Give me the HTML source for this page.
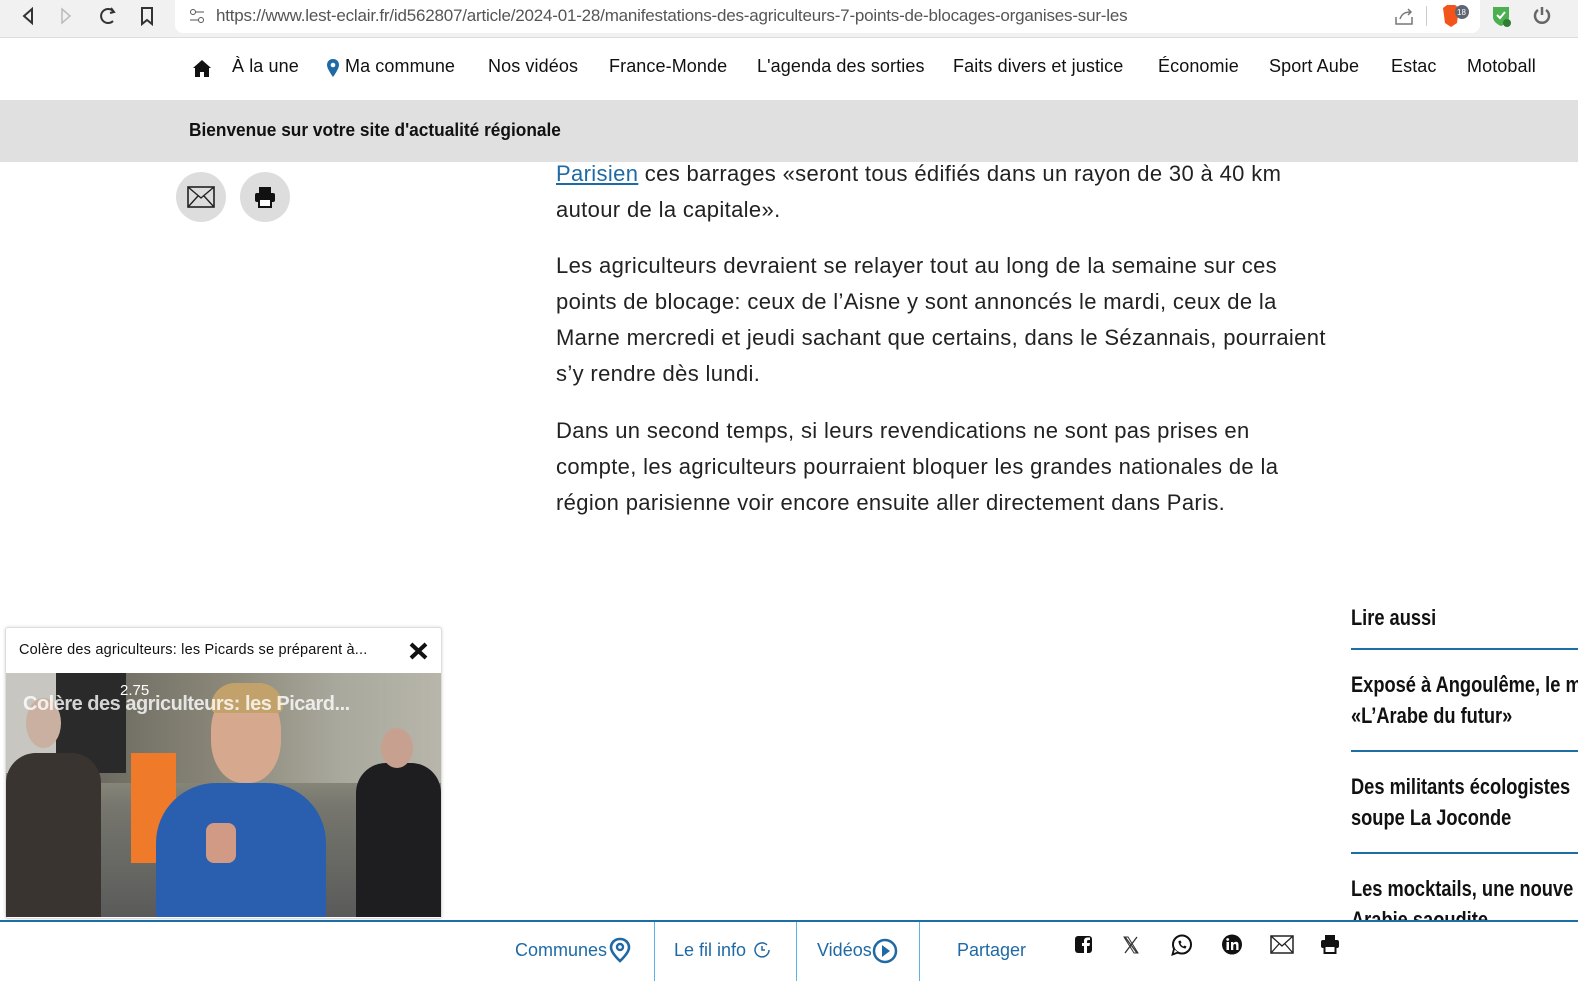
<!DOCTYPE html>
<html><head><meta charset="utf-8">
<style>
*{margin:0;padding:0;box-sizing:border-box}
body{width:1578px;height:981px;overflow:hidden;background:#fff;font-family:"Liberation Sans",sans-serif;color:#222;position:relative}
.abs{position:absolute}
.chrome{left:0;top:0;width:1578px;height:38px;background:#f1f1f1;border-bottom:1px solid #ddd}
.url{left:175px;top:0;width:1305px;height:33px;background:#fff;border-radius:0 0 8px 8px}
.urltext{left:216px;top:6px;font-size:17px;color:#555;white-space:nowrap;letter-spacing:-0.2px}
.nav{top:56px;font-size:18px;color:#111;white-space:nowrap;letter-spacing:0.1px}
.band{left:0;top:100px;width:1578px;height:62px;background:#e0e0e0}
.narrow{font-weight:bold;transform-origin:0 0}
.p{left:556px;font-size:22px;line-height:36px;color:#222;white-space:nowrap;letter-spacing:0.35px}
.circ{width:50px;height:50px;border-radius:50%;background:#ddd;top:172px}
.la{left:1351px;font-size:22px;color:#111;white-space:nowrap;line-height:31px;transform:scaleX(0.83)}
.hr{left:1351px;width:227px;height:2px;background:#1c6ea4}
.bot{left:0;top:920px;width:1578px;height:61px;background:#fff;border-top:2px solid #1c6ea4}
.sep{top:922px;width:1px;height:59px;background:#5ab4e8}
.bl{top:940px;font-size:18px;color:#1f6aa5;white-space:nowrap}
</style></head><body>
<div class="abs chrome"></div>
<div class="abs url"></div>
<svg class="abs" style="left:16px;top:5px" width="150" height="22" viewBox="0 0 150 22">
<path d="M16 4 L8 11 L16 18 Z" fill="none" stroke="#333" stroke-width="2"/>
<path d="M46 4 L54 11 L46 18 Z" fill="none" stroke="#bbb" stroke-width="1.5"/>
<path d="M97 6 A7 7 0 1 0 97 16" fill="none" stroke="#333" stroke-width="2"/><path d="M95 3 L98 7 L94 8" fill="none" stroke="#333" stroke-width="2"/>
<path d="M126 3 H136 V19 L131 15 L126 19 Z" fill="none" stroke="#333" stroke-width="2"/>
</svg>
<svg class="abs" style="left:189px;top:8px" width="16" height="16"><circle cx="4" cy="4" r="2.5" fill="none" stroke="#555"/><path d="M7 4H15M1 12H9" stroke="#555"/><circle cx="12" cy="12" r="2.5" fill="none" stroke="#555"/></svg>
<div class="abs urltext">https://www.lest-eclair.fr/id562807/article/2024-01-28/manifestations-des-agriculteurs-7-points-de-blocages-organises-sur-les</div>
<svg class="abs" style="left:1393px;top:5px" width="22" height="22"><path d="M3 12V19H19V12" fill="none" stroke="#777" stroke-width="1.5"/><path d="M7 14C9 8 13 7 18 7M15 4L18 7L15 10" fill="none" stroke="#777" stroke-width="1.5"/></svg>
<div class="abs" style="left:1426px;top:6px;width:1px;height:20px;background:#ccc"></div>
<svg class="abs" style="left:1440px;top:3px" width="30" height="26"><path d="M3 5L7 2H15L19 5L17 20L11 24L5 20Z" fill="#f2541b"/><circle cx="22" cy="9" r="7" fill="#5f6673"/><text x="17" y="12" font-size="8" fill="#fff" font-family="Liberation Sans">18</text></svg>
<svg class="abs" style="left:1490px;top:4px" width="24" height="24"><path d="M3 3H19V13C19 19 11 22 11 22C11 22 3 19 3 13Z" fill="#4caf50"/><path d="M7 11L10 14L15 8" stroke="#fff" stroke-width="2" fill="none"/><circle cx="17" cy="19" r="4" fill="#2e7d32"/></svg>
<svg class="abs" style="left:1532px;top:5px" width="20" height="20"><path d="M6 5A7 7 0 1 0 14 5" fill="none" stroke="#666" stroke-width="2.5"/><path d="M10 2V10" stroke="#666" stroke-width="2.5"/></svg>

<svg class="abs" style="left:192px;top:58px" width="20" height="20"><path d="M10 2L19 10H17V19H12V14H8V19H3V10H1Z" fill="#111"/></svg>
<div class="abs nav" style="left:232px">À la une</div>
<svg class="abs" style="left:326px;top:58px" width="14" height="20"><path d="M7 1C3 1 1 4 1 7C1 11 7 19 7 19C7 19 13 11 13 7C13 4 11 1 7 1Z" fill="#1f6aa5"/><circle cx="7" cy="7" r="2.3" fill="#fff"/></svg>
<div class="abs nav" style="left:345px">Ma commune</div>
<div class="abs nav" style="left:488px">Nos vidéos</div>
<div class="abs nav" style="left:609px">France-Monde</div>
<div class="abs nav" style="left:757px">L'agenda des sorties</div>
<div class="abs nav" style="left:953px">Faits divers et justice</div>
<div class="abs nav" style="left:1158px">Économie</div>
<div class="abs nav" style="left:1269px">Sport Aube</div>
<div class="abs nav" style="left:1391px">Estac</div>
<div class="abs nav" style="left:1467px">Motoball</div>

<div class="abs band"></div>
<div class="abs narrow" style="left:189px;top:120px;font-size:18px;color:#111;white-space:nowrap;transform:scaleX(0.96)">Bienvenue sur votre site d'actualité régionale</div>

<div class="abs circ" style="left:176px"></div>
<svg class="abs" style="left:187px;top:186px" width="28" height="22"><rect x="1" y="1" width="26" height="20" fill="none" stroke="#222" stroke-width="1.6"/><path d="M1 1L14 12L27 1M1 21L11 10M27 21L17 10" fill="none" stroke="#222" stroke-width="1.4"/></svg>
<div class="abs circ" style="left:240px"></div>
<svg class="abs" style="left:254px;top:186px" width="22" height="22"><rect x="5" y="1" width="12" height="6" fill="#111"/><rect x="1" y="7" width="20" height="9" rx="2" fill="#111"/><rect x="5" y="13" width="12" height="8" fill="#fff" stroke="#111" stroke-width="2"/></svg>

<div class="abs p" style="top:156px"><span style="color:#1f6aa5;text-decoration:underline">Parisien</span> ces barrages «seront tous édifiés dans un rayon de 30 à 40 km<br>autour de la capitale».</div>
<div class="abs p" style="top:248px">Les agriculteurs devraient se relayer tout au long de la semaine sur ces<br>points de blocage: ceux de l’Aisne y sont annoncés le mardi, ceux de la<br>Marne mercredi et jeudi sachant que certains, dans le Sézannais, pourraient<br>s’y rendre dès lundi.</div>
<div class="abs p" style="top:413px">Dans un second temps, si leurs revendications ne sont pas prises en<br>compte, les agriculteurs pourraient bloquer les grandes nationales de la<br>région parisienne voir encore ensuite aller directement dans Paris.</div>

<div class="abs la narrow" style="top:602px">Lire aussi</div>
<div class="abs hr" style="top:648px"></div>
<div class="abs la narrow" style="top:669px">Exposé à Angoulême, le m<br>«L’Arabe du futur»</div>
<div class="abs hr" style="top:750px"></div>
<div class="abs la narrow" style="top:771px">Des militants écologistes<br>soupe La Joconde</div>
<div class="abs hr" style="top:852px"></div>
<div class="abs la narrow" style="top:873px;height:47px;overflow:hidden">Les mocktails, une nouve<br>Arabie saoudite</div>

<div class="abs" style="left:5px;top:627px;width:437px;height:292px;border:1px solid #ddd;border-radius:3px;background:#fff;box-shadow:0 0 3px rgba(0,0,0,.15)"></div>
<div class="abs" style="left:19px;top:642px;font-size:14.5px;color:#111;white-space:nowrap;letter-spacing:0.2px">Colère des agriculteurs: les Picards se préparent à...</div>
<svg class="abs" style="left:409px;top:642px" width="19" height="18"><path d="M2 2L17 16M17 2L2 16" stroke="#111" stroke-width="4"/></svg>
<div class="abs" style="left:6px;top:673px;width:435px;height:244px;overflow:hidden;background:linear-gradient(180deg,#8a8a80 0%,#9a9a88 30%,#76766e 55%,#5a5a5a 100%)">
 <div class="abs" style="left:90px;top:0;width:345px;height:110px;background:linear-gradient(90deg,#6c6a60,#8d8a7c 40%,#a9a89c 70%,#b8b6aa)"></div>
 <div class="abs" style="left:0;top:0;width:60px;height:100px;background:#c8c6c0"></div>
 <div class="abs" style="left:50px;top:0;width:70px;height:100px;background:#2a2a2a"></div>
 <div class="abs" style="left:125px;top:80px;width:45px;height:110px;background:#ee7a2a"></div>
 <div class="abs" style="left:0;top:80px;width:95px;height:164px;background:#3a3430;border-radius:30px 30px 0 0"></div>
 <div class="abs" style="left:20px;top:25px;width:35px;height:50px;background:#c9b0a0;border-radius:50%"></div>
 <div class="abs" style="left:350px;top:90px;width:85px;height:154px;background:#1e1e20;border-radius:30px 30px 0 0"></div>
 <div class="abs" style="left:375px;top:55px;width:32px;height:40px;background:#c8a090;border-radius:50%"></div>
 <div class="abs" style="left:150px;top:110px;width:170px;height:134px;background:#2a5fb0;border-radius:60px 60px 0 0"></div>
 <div class="abs" style="left:205px;top:15px;width:70px;height:95px;background:#d6a88e;border-radius:45%"></div>
 <div class="abs" style="left:205px;top:10px;width:72px;height:30px;background:#c2a26a;border-radius:40px 40px 10px 10px"></div>
 <div class="abs" style="left:200px;top:150px;width:30px;height:40px;background:#d09a84;border-radius:8px"></div>
 <div class="abs" style="left:114px;top:9px;font-size:15px;color:#fff">2.75</div>
 <div class="abs" style="left:17px;top:20px;font-size:20px;font-weight:bold;color:rgba(255,255,255,.8);white-space:nowrap;letter-spacing:-0.5px">Colère des agriculteurs: les Picard...</div>
</div>

<div class="abs bot"></div>
<div class="abs sep" style="left:654px"></div>
<div class="abs sep" style="left:796px"></div>
<div class="abs sep" style="left:919px"></div>
<div class="abs bl" style="left:515px">Communes</div>
<svg class="abs" style="left:609px;top:937px" width="22" height="26"><path d="M11 2C6 2 2 5.5 2 10.5C2 16 11 24 11 24C11 24 20 16 20 10.5C20 5.5 16 2 11 2Z" fill="none" stroke="#1f6aa5" stroke-width="2.6"/><circle cx="11" cy="10" r="3" fill="none" stroke="#1f6aa5" stroke-width="2.4"/></svg>
<div class="abs bl" style="left:674px">Le fil info</div>
<svg class="abs" style="left:753px;top:941px" width="18" height="18"><path d="M14 4A7 7 0 1 0 16 9" fill="none" stroke="#1f6aa5" stroke-width="1.5"/><path d="M9 5V9H12" fill="none" stroke="#1f6aa5" stroke-width="1.5"/></svg>
<div class="abs bl" style="left:817px">Vidéos</div>
<svg class="abs" style="left:872px;top:938px" width="26" height="26"><circle cx="13" cy="13" r="11" fill="none" stroke="#1f6aa5" stroke-width="2.5"/><path d="M10 7L18 13L10 19Z" fill="#1f6aa5"/></svg>
<div class="abs bl" style="left:957px">Partager</div>
<svg class="abs" style="left:1074px;top:934px" width="270" height="22" viewBox="0 0 270 22">
<rect x="1" y="2" width="17" height="17" rx="3" fill="#111"/><path d="M13 19V12H15.5L16 9H13V7.5C13 6.5 13.5 6 14.5 6H16V3.5H13.5C11 3.5 10 5 10 7V9H8V12H10V19Z" fill="#fff"/>
<path d="M51 3L63 19M63 3L51 19" stroke="#333" stroke-width="1.3"/><path d="M50 3H54L64 19H60Z" fill="none" stroke="#333" stroke-width="1"/>
<circle cx="108" cy="10.5" r="9" fill="none" stroke="#111" stroke-width="2"/><path d="M100 15L98.5 20.5L104 18.5" fill="#fff" stroke="#111" stroke-width="1.8"/><path d="M104.5 7C104.5 11 107 14 111.5 14.5L112.5 12.5L110.5 11.5L109.5 12.5C108 12 107 11 106.5 9.5L107.5 8.5L106.5 6.5Z" fill="#111"/>
<circle cx="158" cy="10.5" r="10" fill="#111"/><rect x="152.5" y="8" width="2.5" height="8" fill="#fff"/><circle cx="153.7" cy="5.5" r="1.4" fill="#fff"/><path d="M157 16V8H159.3V9.3C160 8.3 161 7.8 162 7.8C164 7.8 164.5 9.2 164.5 11V16H162.2V11.5C162.2 10.5 161.8 10 161 10C160 10 159.3 10.7 159.3 11.8V16Z" fill="#fff"/>
<rect x="197" y="2" width="22" height="17" fill="none" stroke="#222" stroke-width="1.5"/><path d="M197 2L208 12L219 2M197 19L205 10M219 19L211 10" fill="none" stroke="#222" stroke-width="1.3"/>
<rect x="251" y="1" width="10" height="5" fill="#111"/><rect x="247" y="6" width="18" height="8" rx="2" fill="#111"/><rect x="250.5" y="12" width="11" height="7" fill="#fff" stroke="#111" stroke-width="2"/>
</svg>
</body></html>
